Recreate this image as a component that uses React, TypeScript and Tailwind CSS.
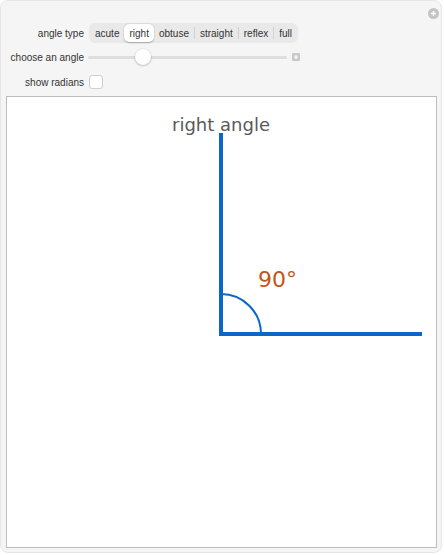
import React from "react";

const options = ["acute", "right", "obtuse", "straight", "reflex", "full"];

export default function App() {
  const selected = 1;
  return (
    <div className="w-[444px] h-[555px] bg-white">
      <div
        className="relative w-[442px] h-[553px] bg-[#f5f5f5] rounded-[8px] border border-[#e6e6e6] text-[10px] text-[#333]"
        style={{ fontFamily: '"Liberation Sans", Arial, sans-serif' }}
      >
        <div className="absolute right-[2px] top-[7px] w-[11px] h-[11px] rounded-full bg-[#c4c4c4] flex items-center justify-center">
          <svg width="7" height="7" viewBox="0 0 7 7">
            <path d="M3.5 1v5M1 3.5h5" stroke="#fff" strokeWidth="1.4" />
          </svg>
        </div>

        <div className="flex flex-col gap-[4px] pt-[22px]">
          <div className="flex items-center h-[20px]">
            <div className="w-[83px] text-right">angle type</div>
            <div className="ml-[5px] flex items-center h-[20px] bg-[#e9e9e9] rounded-[6px] px-[1px]">
              {options.map((o, i) => {
                const sep = i > 0 && i !== selected && i - 1 !== selected;
                return (
                  <React.Fragment key={o}>
                    {sep && <div className="w-px h-[12px] bg-[#d2d2d2]" />}
                    <div
                      className={
                        i === selected
                          ? "h-[18px] px-[5px] flex items-center bg-white rounded-[5px] shadow-[0_0.5px_1.5px_rgba(0,0,0,0.3)]"
                          : "h-[18px] px-[5px] flex items-center"
                      }
                    >
                      {o}
                    </div>
                  </React.Fragment>
                );
              })}
            </div>
          </div>

          <div className="flex items-center h-[20px]">
            <div className="w-[83px] text-right">choose an angle</div>
            <div className="relative ml-[4px] w-[199px] h-[20px] flex items-center">
              <div className="w-full h-[3px] rounded-full bg-[#dedede]" />
              <div className="absolute left-[47px] top-[2px] w-[16px] h-[16px] rounded-full bg-white shadow-[0_0.5px_2px_rgba(0,0,0,0.35)]" />
            </div>
            <div className="ml-[5px] w-[8px] h-[8px] bg-[#cacaca] rounded-[1px] flex items-center justify-center">
              <svg width="6" height="6" viewBox="0 0 6 6">
                <path d="M3 1v4M1 3h4" stroke="#fff" strokeWidth="1.2" />
              </svg>
            </div>
          </div>

          <div className="flex items-center h-[20px] mt-[1px]">
            <div className="w-[83px] text-right">show radians</div>
            <div className="ml-[5px] w-[14px] h-[14px] bg-white rounded-[3px] border border-[#cfcfcf]" />
          </div>
        </div>

        <div className="mt-[4px] ml-[5px] w-[431px] h-[452px] bg-white border border-[#bdbdbd]">
          <svg width="429" height="450" viewBox="0 0 429 450">
            <text
              x="214"
              y="34"
              textAnchor="middle"
              fontSize="18"
              fill="#5a5a5a"
              style={{ fontFamily: '"DejaVu Sans", sans-serif' }}
            >
              right angle
            </text>
            <path d="M214 197 A40 40 0 0 1 254 237" fill="none" stroke="#0a66c8" strokeWidth="2" />
            <line x1="214" y1="36" x2="214" y2="239" stroke="#0a66c8" strokeWidth="4" />
            <line x1="212" y1="237" x2="415" y2="237" stroke="#0a66c8" strokeWidth="4" />
            <text
              x="251"
              y="190"
              fontSize="22"
              fill="#c4541c"
              style={{ fontFamily: '"DejaVu Sans", sans-serif' }}
            >
              90°
            </text>
          </svg>
        </div>
      </div>
    </div>
  );
}
